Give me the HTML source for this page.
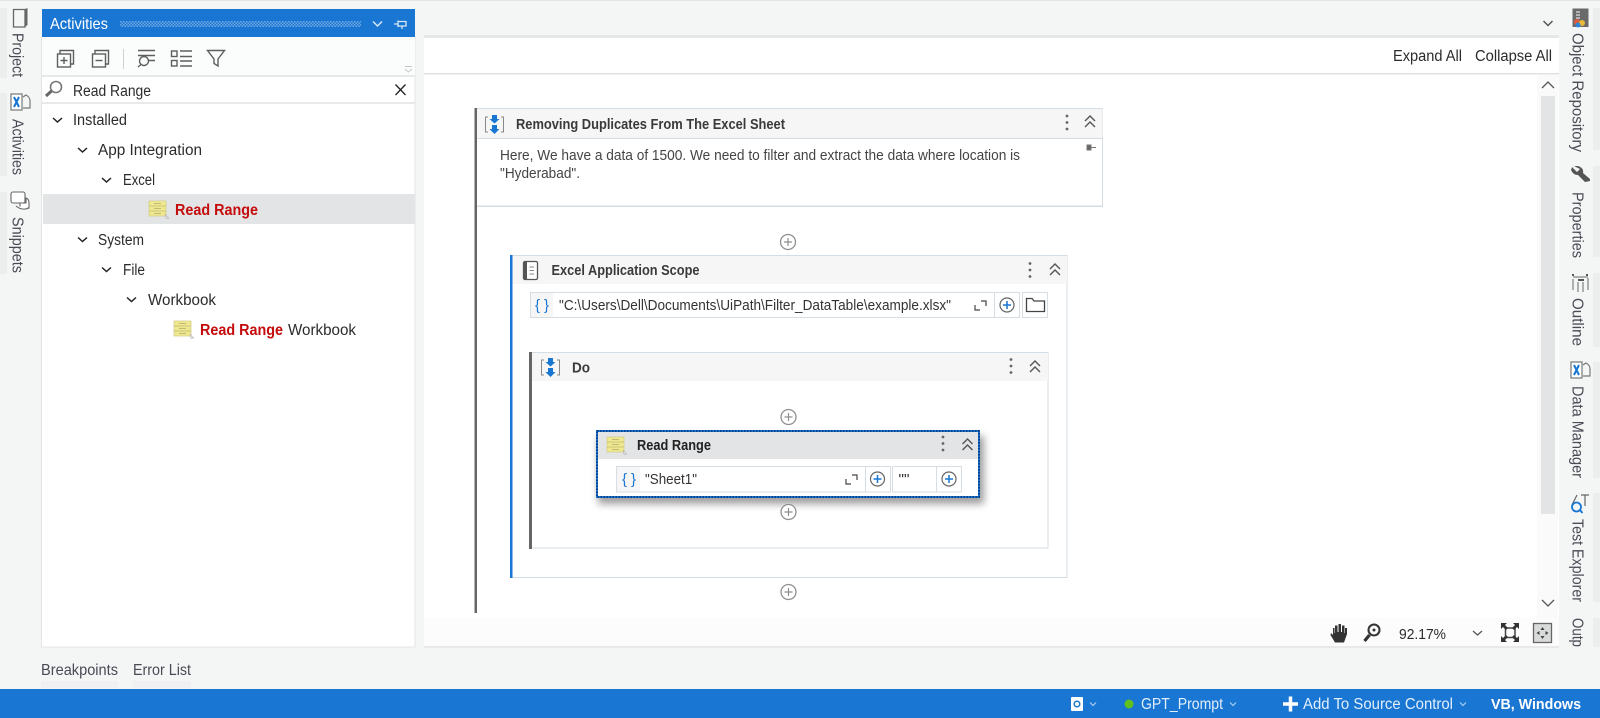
<!DOCTYPE html>
<html><head><meta charset="utf-8"><style>
html,body{margin:0;padding:0;width:1600px;height:718px;overflow:hidden;background:#f4f6f6}
svg{display:block}
text{font-family:"Liberation Sans",sans-serif;font-size:15.5px;fill:#2b2b2b;white-space:pre}
.b{font-weight:bold}
.t{fill:#4a4a55;font-size:16px}
</style></head><body>
<svg width="1600" height="718" viewBox="0 0 1600 718" xmlns="http://www.w3.org/2000/svg">
<defs>
<pattern id="dp" width="3" height="3" patternUnits="userSpaceOnUse"><rect width="3" height="3" fill="#1976d2"/><rect width="1.500" height="1.500" fill="#6ea8e0"/><rect x="1.500" y="1.500" width="1.500" height="1.500" fill="#6ea8e0"/></pattern>
<filter id="sh" x="-10%" y="-30%" width="120%" height="160%"><feGaussianBlur stdDeviation="4"/></filter>
<g id="plusG"><circle r="7.500" fill="#fff" stroke="#8f8f8f" stroke-width="1.300"/><path d="M-4 0H4M0-4V4" stroke="#8f8f8f" stroke-width="1.200"/></g>
<g id="plusB"><circle r="7" fill="#fff" stroke="#666" stroke-width="1.200"/><path d="M-4 0H4M0-4V4" stroke="#1976d2" stroke-width="1.500"/></g>
<g id="dots"><circle cy="-6.500" r="1.400" fill="#666"/><circle cy="0" r="1.400" fill="#666"/><circle cy="6.500" r="1.400" fill="#666"/></g>
<g id="dbl"><path d="M-5-1L0-6L5-1M-5 5L0 0L5 5" fill="none" stroke="#555" stroke-width="1.400"/></g>
<g id="seq"><path d="M3 2H0.500V17H3M16 2H18.500V17H16" fill="none" stroke="#888" stroke-width="1"/><path d="M7 0H12V4H14.500L9.500 8.500L4.500 4H7ZM7 10H12V14H14.500L9.500 19L4.500 14H7Z" fill="#1976d2"/></g>
<g id="xl"><rect width="17" height="15" y="1" fill="#efe88f" stroke="#d3cb85" stroke-width=".7"/><path d="M0 6H17M0 11H17" stroke="#c0b876" stroke-width=".8"/><path d="M5 3.500H12M5 8.500H12M5 13.500H12" stroke="#b3ab70" stroke-width=".8"/><path d="M16 14L20 18L17 18.500Z" fill="#ddd" stroke="#aaa" stroke-width=".5"/></g>
<g id="exp"><path d="M0 5V10H5M6 1H11V6" fill="none" stroke="#444" stroke-width="1.200"/></g>
<g id="dm"><rect x="0" y="1" width="11" height="16" fill="#fff" stroke="#777" stroke-width="1.200"/><path d="M3 4L8 14M8 4L3 14" stroke="#1976d2" stroke-width="2"/><path d="M12 15H19V8Q19 4 15 2L12 4" fill="none" stroke="#777" stroke-width="1.200"/></g>
</defs>

<rect width="1600" height="718" fill="#f4f6f6"/>
<rect width="1600" height="1" fill="#e4e5e5"/>

<!-- left rail -->
<rect x="0" y="8" width="7" height="70" fill="#eceded"/>
<rect x="0" y="93" width="7" height="83" fill="#eceded"/>
<rect x="0" y="192" width="7" height="82" fill="#eceded"/>
<path d="M13.500 9.500H25V27H13.500Z" fill="none" stroke="#666" stroke-width="1.300"/><path d="M25 9L27.500 8V25L25 27" fill="#666"/>
<text class="t" transform="translate(12.500,33) rotate(90)" textLength="44" lengthAdjust="spacingAndGlyphs">Project</text>
<use href="#dm" x="11" y="93"/>
<text class="t" transform="translate(12.500,119) rotate(90)" textLength="56" lengthAdjust="spacingAndGlyphs">Activities</text>
<g fill="#fff" stroke="#666" stroke-width="1.100"><rect x="11" y="192" width="14" height="11" rx="2"/><path d="M20 203H26V198Q29 199 29 203V208H20Z"/><path d="M16 206Q22 211 29 208"/></g>
<text class="t" transform="translate(12.500,217) rotate(90)" textLength="56" lengthAdjust="spacingAndGlyphs">Snippets</text>

<!-- Activities panel -->
<rect x="41.500" y="37.500" width="373.500" height="609.500" fill="#fff" stroke="#e3e5e5"/>
<rect x="42" y="9" width="373" height="28" fill="#1976d2"/>
<text x="50" y="29" style="fill:#fff;font-size:16px" textLength="58" lengthAdjust="spacingAndGlyphs">Activities</text>
<rect x="120" y="21" width="241" height="6" fill="url(#dp)"/>
<path d="M373 21.500L377.500 26L382 21.500" fill="none" stroke="#d8e8f8" stroke-width="1.500"/>
<path d="M394 24H398M398 21.500H406V26H398Z M402 26V29 M398 20.500V27" fill="none" stroke="#d8e8f8" stroke-width="1.300"/>
<rect x="42" y="37" width="373" height="38" fill="#fbfcfc"/>
<g fill="none" stroke="#5e5e5e" stroke-width="1.400">
<rect x="57.500" y="54" width="13" height="13"/><path d="M60 54V50.500H73.500V64H71"/><path d="M64 57V64M60.500 60.500H67.500"/>
<rect x="92.500" y="54" width="13" height="13"/><path d="M95 54V50.500H108.500V64H106"/><path d="M95.500 60.500H102.500"/>
<path d="M138 50.500H155M138 55.500H155M149 60.500H155"/><circle cx="144" cy="61" r="4.500"/><path d="M141 64.500L138 67"/>
<rect x="171.500" y="51" width="5.500" height="5.500"/><rect x="171.500" y="60.500" width="5.500" height="5.500"/><path d="M180 51H192M180 56.500H192M180 61H192M180 66H192"/>
<path d="M207.500 50.500H224.500L218 59V66L214 63.500V59Z"/>
</g>
<rect x="123" y="49" width="1" height="20" fill="#cfd1d1"/>
<path d="M405 66.500H412M405 69L408.500 72L412 69" fill="none" stroke="#c6c6c6"/>
<rect x="42" y="75" width="373" height="2" fill="#e8e9e9"/>
<circle cx="56" cy="87" r="5.500" fill="none" stroke="#777" stroke-width="1.600"/><path d="M51.500 91L46 96" stroke="#666" stroke-width="3"/>
<text x="73" y="96" textLength="78" lengthAdjust="spacingAndGlyphs">Read Range</text>
<path d="M395.500 84.500L405.500 95M405.500 84.500L395.500 95" stroke="#222" stroke-width="1.300"/>
<rect x="42" y="102" width="373" height="2" fill="#e8e9e9"/>

<g fill="none" stroke="#222" stroke-width="1.500">
<path d="M53 118L57.500 122L62 118"/><path d="M78 148L82.500 152L87 148"/><path d="M102 178L106.500 182L111 178"/>
<path d="M78 237.500L82.500 241.500L87 237.500"/><path d="M102 267.500L106.500 271.500L111 267.500"/><path d="M127 297.500L131.500 301.500L136 297.500"/>
</g>
<text x="73" y="125" textLength="54" lengthAdjust="spacingAndGlyphs">Installed</text>
<text x="98" y="155" textLength="104" lengthAdjust="spacingAndGlyphs">App Integration</text>
<text x="123" y="185" textLength="32" lengthAdjust="spacingAndGlyphs">Excel</text>
<rect x="43" y="194" width="372" height="30" fill="#e3e4e6"/>
<use href="#xl" x="149" y="200"/>
<text class="b" x="175" y="215" style="fill:#c40c0c" textLength="83" lengthAdjust="spacingAndGlyphs">Read Range</text>
<text x="98" y="245" textLength="46" lengthAdjust="spacingAndGlyphs">System</text>
<text x="123" y="275" textLength="22" lengthAdjust="spacingAndGlyphs">File</text>
<text x="148" y="305" textLength="68" lengthAdjust="spacingAndGlyphs">Workbook</text>
<use href="#xl" x="174" y="320"/>
<text class="b" x="200" y="335" style="fill:#c40c0c" textLength="83" lengthAdjust="spacingAndGlyphs">Read Range</text>
<text x="288" y="335" textLength="68" lengthAdjust="spacingAndGlyphs">Workbook</text>

<text class="t" x="41" y="675" textLength="77" lengthAdjust="spacingAndGlyphs">Breakpoints</text>
<text class="t" x="133" y="675" textLength="58" lengthAdjust="spacingAndGlyphs">Error List</text>
<rect x="41" y="681" width="77" height="7" fill="#f0eff1"/>
<rect x="133" y="681" width="58" height="7" fill="#f0eff1"/>

<!-- designer -->
<path d="M1543.500 21L1548 25.500L1552.500 21" fill="none" stroke="#555" stroke-width="1.500"/>
<rect x="424" y="35" width="1135" height="3" fill="#e6e7e7"/>
<rect x="424" y="38" width="1135" height="580" fill="#fff"/>
<rect x="424" y="73" width="1135" height="1.500" fill="#dfe1e2"/>
<text x="1393" y="61" textLength="69" lengthAdjust="spacingAndGlyphs">Expand All</text>
<text x="1475" y="61" textLength="77" lengthAdjust="spacingAndGlyphs">Collapse All</text>
<rect x="1537" y="75" width="21" height="543" fill="#fafafa"/>
<rect x="1541" y="96" width="14" height="418" fill="#e3e4e6"/>
<path d="M1542 88L1548 82L1554 88M1542 600L1548 606L1554 600" fill="none" stroke="#555" stroke-width="1.300"/>
<rect x="424" y="618" width="1135" height="28" fill="#fcfcfc"/>
<rect x="424" y="646" width="1135" height="2" fill="#e8e9e9"/>

<!-- Outer sequence -->
<path d="M477 108.500H1102.500V206" fill="none" stroke="#d4dde3"/>
<rect x="477" y="109" width="625.500" height="29" fill="#f6f6f6"/>
<rect x="477" y="138" width="626" height="1" fill="#d4dde3"/>
<rect x="477" y="205.500" width="626" height="1.500" fill="#d4dde3"/>
<rect x="474.500" y="108" width="2.500" height="505" fill="#666"/>
<use href="#seq" x="485" y="115"/>
<text class="b" x="516" y="129" style="font-size:15px;fill:#3a3a3a" textLength="269" lengthAdjust="spacingAndGlyphs">Removing Duplicates From The Excel Sheet</text>
<use href="#dots" x="1067" y="122.500"/><use href="#dbl" x="1090" y="122"/>
<text x="500" y="160" style="font-size:15px;fill:#444" textLength="520" lengthAdjust="spacingAndGlyphs">Here, We have a data of 1500. We need to filter and extract the data where location is</text>
<text x="500" y="178" style="font-size:15px;fill:#444" textLength="80" lengthAdjust="spacingAndGlyphs">"Hyderabad".</text>
<path d="M1087 145H1091V150H1087ZM1091 147.500H1096" fill="#666" stroke="#777"/>
<use href="#plusG" x="788" y="242"/>

<!-- Excel scope -->
<rect x="511" y="255.500" width="556" height="322" fill="#fff" stroke="#d4dde3"/>
<rect x="512" y="256" width="555" height="28" fill="#f6f6f6"/>
<rect x="510" y="255" width="2.500" height="323" fill="#1976d2"/>
<rect x="523.500" y="261.500" width="14" height="18" rx="1.500" fill="#fff" stroke="#555" stroke-width="1.300"/><rect x="524" y="262" width="3" height="17" fill="#555"/><path d="M529.500 267H534M529.500 270.500H534M529.500 274H534" stroke="#888"/>
<text class="b" x="551.500" y="275" style="font-size:15px;fill:#3a3a3a" textLength="148" lengthAdjust="spacingAndGlyphs">Excel Application Scope</text>
<use href="#dots" x="1030" y="270"/><use href="#dbl" x="1055" y="270"/>
<rect x="530.500" y="292.500" width="489" height="25" fill="#fff" stroke="#d7dee3"/>
<rect x="531" y="293" width="22" height="24" fill="#f6f6f6"/>
<text x="535" y="310" style="fill:#1976d2;font-size:15px" textLength="14" lengthAdjust="spacing">{}</text>
<text x="559" y="310" style="font-size:15px;fill:#333" textLength="392" lengthAdjust="spacingAndGlyphs">"C:\Users\Dell\Documents\UiPath\Filter_DataTable\example.xlsx"</text>
<use href="#exp" x="975" y="300"/>
<rect x="994" y="293" width="1" height="24" fill="#d7dee3"/>
<use href="#plusB" x="1007" y="305"/>
<rect x="1022.500" y="292.500" width="25" height="25" fill="#fff" stroke="#d7dee3"/>
<path d="M1026.500 298.500H1032L1034 301H1044.500V311.500H1026.500Z" fill="#fff" stroke="#444" stroke-width="1.300"/>

<!-- Do -->
<rect x="531" y="352.500" width="517" height="195.500" fill="#fff" stroke="#d4dde3"/>
<rect x="532" y="353" width="516" height="28" fill="#f6f6f6"/>
<rect x="529" y="352" width="3" height="197" fill="#666"/>
<use href="#seq" x="541" y="358"/>
<text class="b" x="572" y="372.500" style="font-size:15px;fill:#3a3a3a" textLength="18" lengthAdjust="spacingAndGlyphs">Do</text>
<use href="#dots" x="1011" y="366"/><use href="#dbl" x="1035" y="367"/>
<use href="#plusG" x="788.500" y="417"/>
<use href="#plusG" x="788.500" y="592"/>

<!-- Read Range selected -->
<rect x="598" y="436" width="386" height="68" fill="#000" opacity=".38" filter="url(#sh)"/>
<rect x="597" y="431" width="382" height="66" fill="#fff" stroke="#1976d2" stroke-width="2"/>
<rect x="597" y="431" width="382" height="66" fill="none" stroke="#0b3f86" stroke-width="2" stroke-dasharray="1.500 1.500"/>
<rect x="598" y="432" width="380" height="27" fill="#e3e4e6"/>
<use href="#xl" x="607" y="436"/>
<text class="b" x="637" y="450" style="font-size:15px;fill:#222" textLength="74" lengthAdjust="spacingAndGlyphs">Read Range</text>
<use href="#dots" x="943" y="443.500"/><use href="#dbl" x="967.500" y="445"/>
<rect x="616.500" y="466.500" width="274" height="25.500" fill="#fff" stroke="#d7dee3"/>
<rect x="617" y="467" width="23" height="24.500" fill="#f6f6f6"/>
<text x="622" y="484" style="fill:#1976d2;font-size:15px" textLength="14" lengthAdjust="spacing">{}</text>
<text x="645" y="484" style="font-size:15px;fill:#333" textLength="52" lengthAdjust="spacingAndGlyphs">"Sheet1"</text>
<use href="#exp" x="846" y="474"/>
<rect x="865" y="467" width="1" height="25" fill="#d7dee3"/>
<use href="#plusB" x="877.500" y="479"/>
<rect x="892.500" y="466.500" width="69" height="25.500" fill="#fff" stroke="#d7dee3"/>
<text x="898.500" y="484" style="font-size:15px;fill:#333" textLength="11" lengthAdjust="spacingAndGlyphs">""</text>
<rect x="936" y="467" width="1" height="25" fill="#d7dee3"/>
<use href="#plusB" x="949" y="479"/>
<use href="#plusG" x="788.500" y="512"/>

<!-- zoom toolbar icons -->
<path d="M1333 628V635L1331 633L1330.500 635L1335 642.500H1344L1347 634L1347 628L1345 628V633H1344.500V625.500L1342 625.500V632H1341V624L1338.500 624V632H1337.500V625.500L1335 625.500V633H1334.500V628Z" fill="#333"/>
<circle cx="1374" cy="630" r="5.500" fill="none" stroke="#333" stroke-width="2"/><circle cx="1374" cy="630" r="1.500" fill="#333"/><path d="M1369.500 635L1364.500 641" stroke="#333" stroke-width="3.200"/>
<text x="1399" y="639" style="font-size:15px" textLength="47" lengthAdjust="spacingAndGlyphs">92.17%</text>
<path d="M1473 631L1477.500 635L1482 631" fill="none" stroke="#555" stroke-width="1.300"/>
<path d="M1505.500 628H1515V637.500H1505.500Z" fill="none" stroke="#444" stroke-width="1.500"/>
<path d="M1501 623H1507L1505 625L1508 628L1506 630L1503 627L1501 629ZM1519 623V629L1517 627L1514 630L1512 628L1515 625L1513 623ZM1501 642V636L1503 638L1506 635L1508 637L1505 640L1507 642ZM1519 642H1513L1515 640L1512 637L1514 635L1517 638L1519 636Z" fill="#333"/>
<rect x="1533.500" y="623.500" width="18" height="19" fill="#d9dada" stroke="#666" stroke-width="1.300"/>
<path d="M1542.500 627L1544.500 630H1540.500ZM1542.500 639L1544.500 636H1540.500ZM1536.500 633L1539.500 631V635ZM1548.500 633L1545.500 631V635Z" fill="#444"/>

<!-- right rail -->
<rect x="1593" y="8" width="7" height="142" fill="#eceded"/>
<rect x="1593" y="166" width="7" height="91" fill="#eceded"/>
<rect x="1593" y="273" width="7" height="74" fill="#eceded"/>
<rect x="1593" y="362" width="7" height="116" fill="#eceded"/>
<rect x="1593" y="493" width="7" height="109" fill="#eceded"/>
<rect x="1593" y="618" width="7" height="29" fill="#eceded"/>
<rect x="1572.500" y="8.500" width="16" height="18.500" fill="#6a6a6a"/>
<path d="M1576 12H1580M1576 15H1580M1576 18H1580" stroke="#fff"/>
<circle cx="1577" cy="22" r="3" fill="#e05a3a"/><circle cx="1582" cy="23" r="3" fill="#e8b93a"/><circle cx="1578" cy="25" r="2.500" fill="#2f86d8"/>
<text class="t" transform="translate(1572.500,33) rotate(90)" textLength="119" lengthAdjust="spacingAndGlyphs">Object Repository</text>
<path d="M1572 167L1577 172L1580 169L1574 166L1578 166Q1584 168 1583 173L1590 179V181L1585 182L1578 175Q1573 175 1571 170Z" fill="#555"/>
<text class="t" transform="translate(1572.500,192) rotate(90)" textLength="66" lengthAdjust="spacingAndGlyphs">Properties</text>
<path d="M1572 274H1574V276H1572ZM1586 274H1588V276H1586ZM1578 279H1584V281H1578Z" fill="#555"/><path d="M1573 279V290M1578 282V292M1583 282V292M1588 278V290M1573 277H1588" stroke="#666" fill="none"/>
<text class="t" transform="translate(1572.500,298) rotate(90)" textLength="48" lengthAdjust="spacingAndGlyphs">Outline</text>
<use href="#dm" x="1571" y="361"/>
<text class="t" transform="translate(1572.500,386) rotate(90)" textLength="92" lengthAdjust="spacingAndGlyphs">Data Manager</text>
<path d="M1581 495H1589M1585 495V506M1577 495L1572 505" fill="none" stroke="#666" stroke-width="1.200"/>
<circle cx="1576.500" cy="507" r="4.500" fill="none" stroke="#1976d2" stroke-width="1.800"/><path d="M1580 510L1582.500 513" stroke="#1976d2" stroke-width="1.800"/>
<text class="t" transform="translate(1572.500,519) rotate(90)" textLength="83" lengthAdjust="spacingAndGlyphs">Test Explorer</text>
<text class="t" transform="translate(1572.500,618) rotate(90)" textLength="29" lengthAdjust="spacingAndGlyphs">Outp</text>

<!-- status bar -->
<rect y="689" width="1600" height="29" fill="#1976d2"/>
<rect x="1071" y="697" width="12" height="14" rx="1" fill="#fff"/><circle cx="1077" cy="704" r="2.800" fill="none" stroke="#1976d2" stroke-width="1.500"/>
<g fill="none" stroke="#a9cdf0" stroke-width="1.200"><path d="M1090 702.500L1093 705.500L1096 702.500"/><path d="M1230 702.500L1233 705.500L1236 702.500"/><path d="M1460 702.500L1463 705.500L1466 702.500"/></g>
<circle cx="1129" cy="704" r="4.500" fill="#5fc11e"/>
<text x="1141" y="709" style="fill:#e2effb" textLength="82" lengthAdjust="spacingAndGlyphs">GPT_Prompt</text>
<path d="M1283 704H1298M1290.500 696.500V711.500" stroke="#fff" stroke-width="3.500"/>
<text x="1303" y="709" style="fill:#e2effb" textLength="150" lengthAdjust="spacingAndGlyphs">Add To Source Control</text>
<text class="b" x="1491" y="709" style="fill:#fff;font-size:15px" textLength="90" lengthAdjust="spacingAndGlyphs">VB, Windows</text>
</svg>
</body></html>
